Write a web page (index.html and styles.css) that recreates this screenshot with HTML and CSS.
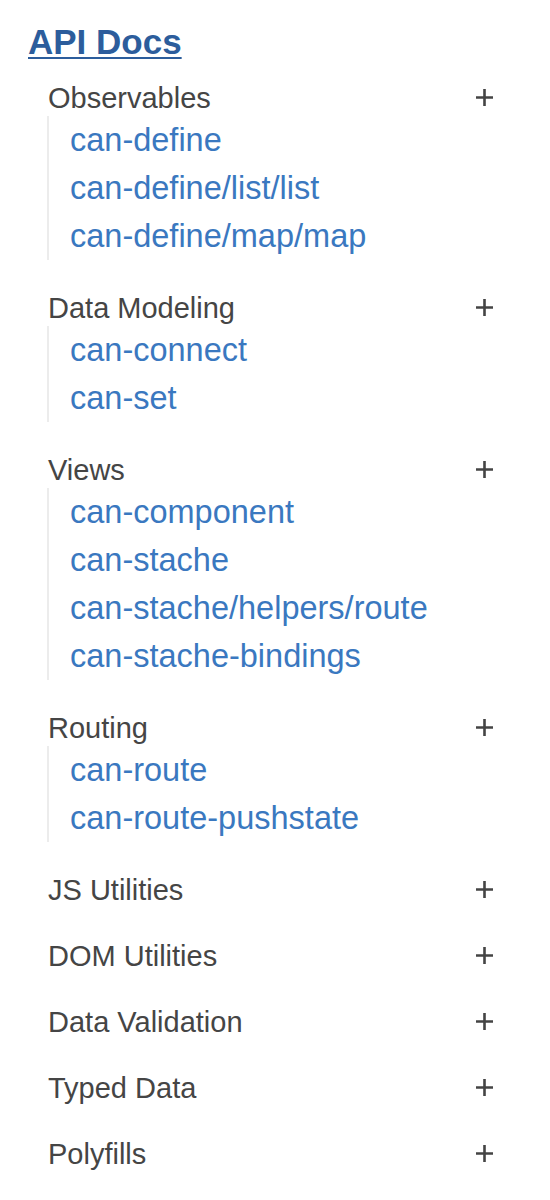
FILE: index.html
```html
<!DOCTYPE html>
<html lang="en">
<head>
<meta charset="utf-8">
<title>API Docs</title>
<link rel="stylesheet" href="styles.css">
</head>
<body>
<nav class="sidebar">
  <a class="title" href="#">API Docs</a>
  <ul class="sections">
    <li class="section">
      <div class="section-head"><span class="section-name">Observables</span><svg class="plus" viewBox="0 0 17 17"><path d="M8.5 0V17M0 8.5H17"/></svg></div>
      <ul class="links">
        <li><a href="#">can-define</a></li>
        <li><a href="#">can-define/list/list</a></li>
        <li><a href="#">can-define/map/map</a></li>
      </ul>
    </li>
    <li class="section">
      <div class="section-head"><span class="section-name">Data Modeling</span><svg class="plus" viewBox="0 0 17 17"><path d="M8.5 0V17M0 8.5H17"/></svg></div>
      <ul class="links">
        <li><a href="#">can-connect</a></li>
        <li><a href="#">can-set</a></li>
      </ul>
    </li>
    <li class="section">
      <div class="section-head"><span class="section-name">Views</span><svg class="plus" viewBox="0 0 17 17"><path d="M8.5 0V17M0 8.5H17"/></svg></div>
      <ul class="links">
        <li><a href="#">can-component</a></li>
        <li><a href="#">can-stache</a></li>
        <li><a href="#">can-stache/helpers/route</a></li>
        <li><a href="#">can-stache-bindings</a></li>
      </ul>
    </li>
    <li class="section">
      <div class="section-head"><span class="section-name">Routing</span><svg class="plus" viewBox="0 0 17 17"><path d="M8.5 0V17M0 8.5H17"/></svg></div>
      <ul class="links">
        <li><a href="#">can-route</a></li>
        <li><a href="#">can-route-pushstate</a></li>
      </ul>
    </li>
    <li class="section">
      <div class="section-head"><span class="section-name">JS Utilities</span><svg class="plus" viewBox="0 0 17 17"><path d="M8.5 0V17M0 8.5H17"/></svg></div>
    </li>
    <li class="section">
      <div class="section-head"><span class="section-name">DOM Utilities</span><svg class="plus" viewBox="0 0 17 17"><path d="M8.5 0V17M0 8.5H17"/></svg></div>
    </li>
    <li class="section">
      <div class="section-head"><span class="section-name">Data Validation</span><svg class="plus" viewBox="0 0 17 17"><path d="M8.5 0V17M0 8.5H17"/></svg></div>
    </li>
    <li class="section">
      <div class="section-head"><span class="section-name">Typed Data</span><svg class="plus" viewBox="0 0 17 17"><path d="M8.5 0V17M0 8.5H17"/></svg></div>
    </li>
    <li class="section">
      <div class="section-head"><span class="section-name">Polyfills</span><svg class="plus" viewBox="0 0 17 17"><path d="M8.5 0V17M0 8.5H17"/></svg></div>
    </li>
  </ul>
</nav>
</body>
</html>
```
FILE: styles.css
```css
html, body {
  margin: 0;
  padding: 0;
  background: #ffffff;
}

body {
  font-family: "Liberation Sans", Arial, Helvetica, sans-serif;
}

.sidebar {
  width: 467px;
  padding: 22px 0 0 28px;
  display: flex;
  flex-direction: column;
}

.title {
  display: block;
  align-self: flex-start;
  font-size: 35px;
  font-weight: bold;
  line-height: 40px;
  color: #2c5d9c;
  text-decoration: underline;
  text-decoration-thickness: 2px;
  text-underline-offset: 3px;
}

.sections {
  list-style: none;
  margin: 18px 0 0 20px;
  padding: 0;
  display: flex;
  flex-direction: column;
  gap: 30px;
}

.section {
  display: flex;
  flex-direction: column;
}

.section-head {
  display: flex;
  justify-content: space-between;
  align-items: center;
  height: 36px;
  line-height: 36px;
  font-size: 29px;
  color: #454545;
}

.plus {
  width: 17px;
  height: 17px;
  margin-right: 2px;
  margin-top: -2px;
}

.plus path {
  stroke: #444;
  stroke-width: 2.6;
  fill: none;
}

.links {
  list-style: none;
  margin: 0;
  padding: 0 0 0 21px;
  border-left: 2px solid #ececec;
  margin-left: -1px;
}

.links li {
  height: 48px;
  line-height: 48px;
  font-size: 32.5px;
}

.links a {
  color: #3a78c0;
  text-decoration: none;
}
```
